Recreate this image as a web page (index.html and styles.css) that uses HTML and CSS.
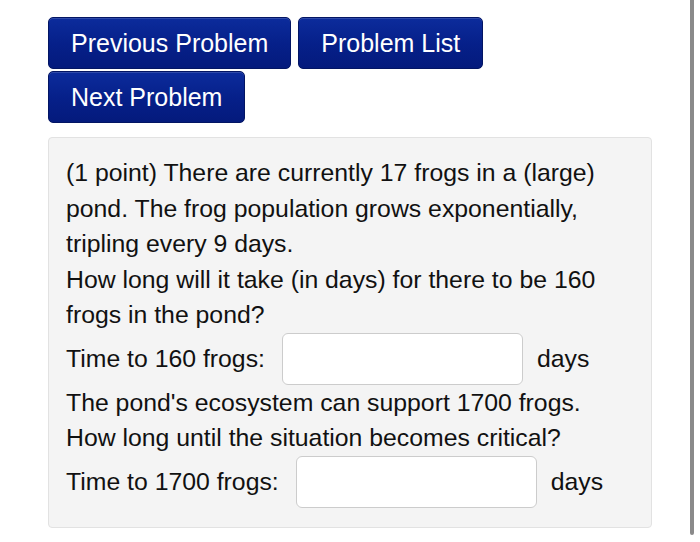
FILE: index.html
```html
<!DOCTYPE html>
<html>
<head>
<meta charset="utf-8">
<link rel="stylesheet" href="styles.css">
</head>
<body>
<div class="page">
  <div class="nav">
    <a class="btn">Previous Problem</a>
    <a class="btn">Problem List</a>
    <a class="btn">Next Problem</a>
  </div>
  <div class="problem">
    <p>(1 point) There are currently 17 frogs in a (large) pond. The frog population grows exponentially, tripling every 9 days.<br>How long will it take (in days) for there to be 160 frogs in the pond?</p>
    <div class="row">Time to 160 frogs: <span class="input"></span> days</div>
    <p>The pond's ecosystem can support 1700 frogs.<br>How long until the situation becomes critical?</p>
    <div class="row">Time to 1700 frogs: <span class="input"></span> days</div>
  </div>
</div>
<div class="scrollbar"></div>
</body>
</html>
```
FILE: styles.css
```css
html, body {
  margin: 0;
  padding: 0;
  background: #ffffff;
}
body {
  font-family: "Liberation Sans", Arial, sans-serif;
  color: #111;
}
.page {
  padding: 17px 0 0 48px;
  width: 604px;
}
.nav {
  display: flex;
  flex-wrap: wrap;
  gap: 2px 7px;
  width: 450px;
}
.btn {
  display: inline-block;
  box-sizing: border-box;
  height: 52px;
  line-height: 50px;
  padding: 0 22px;
  font-size: 25px;
  color: #fff;
  background: linear-gradient(#0c2c9c, #06208a 50%, #041a7c);
  border: 1px solid #031563;
  border-radius: 5px;
  box-shadow: inset 0 1px 0 rgba(255, 255, 255, 0.15);
}
.problem {
  margin-top: 14px;
  box-sizing: border-box;
  width: 604px;
  height: 391px;
  background: #f4f4f4;
  border: 1px solid #e2e2e2;
  border-radius: 4px;
  padding: 17px 17px 0 17px;
  font-size: 24.8px;
  line-height: 35.5px;
}
.problem p {
  margin: 0;
}
.row {
  display: flex;
  align-items: center;
  gap: 14px;
  margin: 0;
  height: 52px;
}
.input {
  display: inline-block;
  box-sizing: border-box;
  width: 241px;
  height: 52px;
  margin-left: 3px;
  background: #fff;
  border: 1px solid #cccccc;
  border-radius: 6px;
}
.scrollbar {
  position: absolute;
  left: 690px;
  top: 0;
  width: 4px;
  height: 535px;
  background: #8a8a8a;
  border-radius: 0 0 2px 2px;
}
```
